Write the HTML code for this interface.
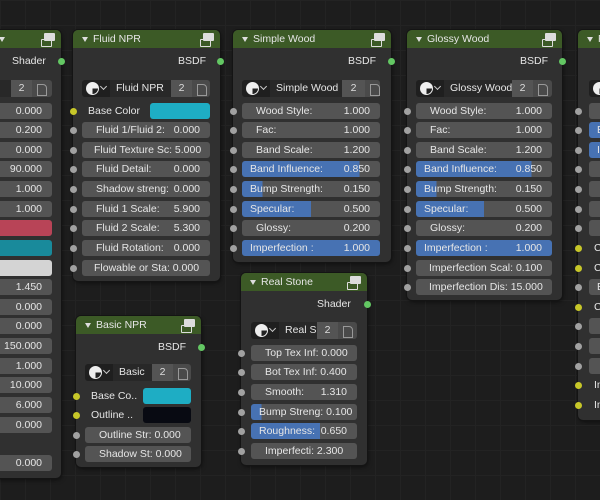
<!DOCTYPE html>
<html><head><meta charset="utf-8"><style>
*{margin:0;padding:0;box-sizing:border-box}
body{width:600px;height:500px;overflow:hidden;position:relative;background:#1d1d1d;
background-image:linear-gradient(#232323 1px,transparent 1px),linear-gradient(90deg,#232323 1px,transparent 1px);background-size:25px 25px;
font-family:"Liberation Sans",sans-serif;font-size:10.5px;color:#e0e0e0}
.n{position:absolute;background:#303030;border-radius:5px;box-shadow:0 0 0 1px #141414,1px 2px 4px rgba(0,0,0,.5);overflow:hidden}
.h{position:absolute;left:0;right:0;top:0;height:18px;background:#3c5a26;color:#e6e6e6;font-size:10.5px;line-height:18px;padding-left:20px}
.h:before{content:"";position:absolute;left:9px;top:7px;border-left:3px solid transparent;border-right:3px solid transparent;border-top:5px solid #ddd}
.hi{position:absolute;right:7px;top:3px;width:13px;height:12px}
.hi:before{content:"";position:absolute;left:3px;top:0;width:9px;height:6px;border:1.5px solid #ddd;border-radius:1px;background:#ddd}
.hi:after{content:"";position:absolute;left:0;top:6px;width:9px;height:6px;border:1.5px solid #ddd;border-radius:1px}
.f{position:absolute;height:16px;background:#545454;border-radius:3px;line-height:16px;white-space:nowrap;overflow:hidden;color:#e6e6e6;padding:0 4px 0 14px}
.f b{position:absolute;right:10px;top:0;font-weight:normal}
.sl{padding-left:8px}
.s{position:absolute;width:7px;height:7px;border-radius:50%;background:#a1a1a1}
.y{background:#c7c729}.g{background:#63c763}
.t{position:absolute;line-height:16px;color:#e6e6e6;white-space:nowrap}
.db{position:absolute;height:17px}
.db .ic{position:absolute;left:0;top:0;height:17px;background:#1f1f1f;border-radius:3px 0 0 3px}
.db .ic i{position:absolute;left:4px;top:2px;width:13px;height:13px;border-radius:50%;background:conic-gradient(#eee 0 25%,#222 25% 50%,#eee 50% 75%,#eee 75%);border:1px solid #eee}
.db .ic u{position:absolute;left:19px;top:4px;width:5px;height:5px;border-right:1px solid #ccc;border-bottom:1px solid #ccc;transform:rotate(45deg)}
.db .nm{position:absolute;top:0;height:17px;background:#282828;line-height:17px;padding-left:6px;color:#e6e6e6;overflow:hidden;white-space:nowrap}
.db .nu{position:absolute;top:0;height:17px;background:#545454;line-height:17px;text-align:center;color:#ddd}
.db .pg{position:absolute;top:0;height:17px;background:#4a4a4a;border-radius:0 3px 3px 0}
.db .pg:after{content:"";position:absolute;left:5px;top:4px;width:8px;height:10px;border:1px solid #999;border-radius:0 4px 0 0}
.sw{position:absolute;height:16px;border-radius:3px}
</style></head><body>

<!-- Left node -->
<div class="n" style="left:-10px;top:30px;width:71px;height:448px"><div class="h"></div><div class="hi"></div></div>
<div class="t" style="left:12px;top:53px">Shader</div><div class="s g" style="left:57.5px;top:57.5px"></div>
<div class="db" style="left:-2px;top:80px;width:54px"><div class="nm" style="left:0;width:13px"></div><div class="nu" style="left:13px;width:21px">2</div><div class="pg" style="left:34px;width:20px"></div></div>
<div class="f" style="left:-6px;top:103px;width:58px"><b>0.000</b></div>
<div class="f" style="left:-6px;top:122px;width:58px"><b>0.200</b></div>
<div class="f" style="left:-6px;top:142px;width:58px"><b>0.000</b></div>
<div class="f" style="left:-6px;top:161px;width:58px"><b>90.000</b></div>
<div class="f" style="left:-6px;top:181px;width:58px"><b>1.000</b></div>
<div class="f" style="left:-6px;top:201px;width:58px"><b>1.000</b></div>
<div class="sw" style="left:-6px;top:220px;width:58px;background:#b84457"></div>
<div class="sw" style="left:-6px;top:240px;width:58px;background:#198a9b"></div>
<div class="sw" style="left:-6px;top:260px;width:58px;background:#d4d4d4"></div>
<div class="f" style="left:-6px;top:279px;width:58px"><b>1.450</b></div>
<div class="f" style="left:-6px;top:299px;width:58px"><b>0.000</b></div>
<div class="f" style="left:-6px;top:318px;width:58px"><b>0.000</b></div>
<div class="f" style="left:-6px;top:338px;width:58px"><b>150.000</b></div>
<div class="f" style="left:-6px;top:358px;width:58px"><b>1.000</b></div>
<div class="f" style="left:-6px;top:377px;width:58px"><b>10.000</b></div>
<div class="f" style="left:-6px;top:397px;width:58px"><b>6.000</b></div>
<div class="f" style="left:-6px;top:417px;width:58px"><b>0.000</b></div>
<div class="f" style="left:-6px;top:455px;width:58px"><b>0.000</b></div>

<!-- Fluid NPR -->
<div class="n" style="left:73px;top:30px;width:147px;height:251px"><div class="h">Fluid NPR</div><div class="hi"></div></div>
<div class="t" style="left:178px;top:53px">BSDF</div><div class="s g" style="left:216.5px;top:57.5px"></div>
<div class="db" style="left:82px;top:80px;width:128px"><div class="ic" style="width:28px"><i></i><u></u></div><div class="nm" style="left:28px;width:61px">Fluid NPR</div><div class="nu" style="left:89px;width:21px">2</div><div class="pg" style="left:110px;width:18px"></div></div>
<div class="s y" style="left:69.5px;top:107.5px"></div><div class="t" style="left:88px;top:103px">Base Color</div><div class="sw" style="left:150px;top:103px;width:60px;background:#1eadc4"></div>
<div class="s" style="left:69.5px;top:126.5px"></div><div class="f" style="left:82px;top:122px;width:128px">Fluid 1/Fluid 2:<b>0.000</b></div>
<div class="s" style="left:69.5px;top:146.5px"></div><div class="f" style="left:82px;top:142px;width:128px;padding-left:12px">Fluid Texture Sc: 5.000</div>
<div class="s" style="left:69.5px;top:165.5px"></div><div class="f" style="left:82px;top:161px;width:128px">Fluid Detail:<b>0.000</b></div>
<div class="s" style="left:69.5px;top:185.5px"></div><div class="f" style="left:82px;top:181px;width:128px">Shadow streng:<b>0.000</b></div>
<div class="s" style="left:69.5px;top:205.5px"></div><div class="f" style="left:82px;top:201px;width:128px">Fluid 1 Scale:<b>5.900</b></div>
<div class="s" style="left:69.5px;top:224.5px"></div><div class="f" style="left:82px;top:220px;width:128px">Fluid 2 Scale:<b>5.300</b></div>
<div class="s" style="left:69.5px;top:244.5px"></div><div class="f" style="left:82px;top:240px;width:128px">Fluid Rotation:<b>0.000</b></div>
<div class="s" style="left:69.5px;top:264.5px"></div><div class="f" style="left:82px;top:260px;width:128px;padding-left:12px">Flowable or Sta: 0.000</div>

<!-- Simple Wood -->
<div class="n" style="left:233px;top:30px;width:158px;height:232px"><div class="h">Simple Wood</div><div class="hi"></div></div>
<div class="t" style="left:348px;top:53px">BSDF</div><div class="s g" style="left:387.5px;top:57.5px"></div>
<div class="db" style="left:242px;top:80px;width:138px"><div class="ic" style="width:28px"><i></i><u></u></div><div class="nm" style="left:28px;width:72px">Simple Wood</div><div class="nu" style="left:100px;width:23px">2</div><div class="pg" style="left:123px;width:15px"></div></div>
<div class="s" style="left:229.5px;top:107.5px"></div><div class="f" style="left:242px;top:103px;width:138px">Wood Style:<b>1.000</b></div>
<div class="s" style="left:229.5px;top:126.5px"></div><div class="f" style="left:242px;top:122px;width:138px">Fac:<b>1.000</b></div>
<div class="s" style="left:229.5px;top:146.5px"></div><div class="f" style="left:242px;top:142px;width:138px">Band Scale:<b>1.200</b></div>
<div class="s" style="left:229.5px;top:165.5px"></div><div class="f sl" style="left:242px;top:161px;width:138px;background:linear-gradient(90deg,#4772b3 85%,#545454 85%)">Band Influence:<b>0.850</b></div>
<div class="s" style="left:229.5px;top:185.5px"></div><div class="f sl" style="left:242px;top:181px;width:138px;background:linear-gradient(90deg,#4772b3 15%,#545454 15%)">Bump Strength:<b>0.150</b></div>
<div class="s" style="left:229.5px;top:205.5px"></div><div class="f sl" style="left:242px;top:201px;width:138px;background:linear-gradient(90deg,#4772b3 50%,#545454 50%)">Specular:<b>0.500</b></div>
<div class="s" style="left:229.5px;top:224.5px"></div><div class="f" style="left:242px;top:220px;width:138px">Glossy:<b>0.200</b></div>
<div class="s" style="left:229.5px;top:244.5px"></div><div class="f sl" style="left:242px;top:240px;width:138px;background:#4772b3">Imperfection :<b>1.000</b></div>

<!-- Glossy Wood -->
<div class="n" style="left:407px;top:30px;width:155px;height:270px"><div class="h">Glossy Wood</div><div class="hi"></div></div>
<div class="t" style="left:520px;top:53px">BSDF</div><div class="s g" style="left:558.5px;top:57.5px"></div>
<div class="db" style="left:416px;top:80px;width:136px"><div class="ic" style="width:28px"><i></i><u></u></div><div class="nm" style="left:28px;width:68px">Glossy Wood</div><div class="nu" style="left:96px;width:21px">2</div><div class="pg" style="left:117px;width:19px"></div></div>
<div class="s" style="left:403.5px;top:107.5px"></div><div class="f" style="left:416px;top:103px;width:136px">Wood Style:<b>1.000</b></div>
<div class="s" style="left:403.5px;top:126.5px"></div><div class="f" style="left:416px;top:122px;width:136px">Fac:<b>1.000</b></div>
<div class="s" style="left:403.5px;top:146.5px"></div><div class="f" style="left:416px;top:142px;width:136px">Band Scale:<b>1.200</b></div>
<div class="s" style="left:403.5px;top:165.5px"></div><div class="f sl" style="left:416px;top:161px;width:136px;background:linear-gradient(90deg,#4772b3 85%,#545454 85%)">Band Influence:<b>0.850</b></div>
<div class="s" style="left:403.5px;top:185.5px"></div><div class="f sl" style="left:416px;top:181px;width:136px;background:linear-gradient(90deg,#4772b3 15%,#545454 15%)">Bump Strength:<b>0.150</b></div>
<div class="s" style="left:403.5px;top:205.5px"></div><div class="f sl" style="left:416px;top:201px;width:136px;background:linear-gradient(90deg,#4772b3 50%,#545454 50%)">Specular:<b>0.500</b></div>
<div class="s" style="left:403.5px;top:224.5px"></div><div class="f" style="left:416px;top:220px;width:136px">Glossy:<b>0.200</b></div>
<div class="s" style="left:403.5px;top:244.5px"></div><div class="f sl" style="left:416px;top:240px;width:136px;background:#4772b3">Imperfection :<b>1.000</b></div>
<div class="s" style="left:403.5px;top:264.5px"></div><div class="f" style="left:416px;top:260px;width:136px;padding-left:13px">Imperfection Scal: 0.100</div>
<div class="s" style="left:403.5px;top:283.5px"></div><div class="f" style="left:416px;top:279px;width:136px;padding-left:13px">Imperfection Dis: 15.000</div>

<!-- Right node -->
<div class="n" style="left:578px;top:30px;width:40px;height:390px"><div class="h" style="padding-left:20px">F</div></div>
<div class="db" style="left:589px;top:80px;width:20px"><div class="ic" style="width:20px"><i></i></div></div>
<div class="s" style="left:574.5px;top:107.5px"></div><div class="f" style="left:589px;top:103px;width:20px"></div>
<div class="s" style="left:574.5px;top:126.5px"></div><div class="f sl" style="left:589px;top:122px;width:20px;background:#4772b3">B</div>
<div class="s" style="left:574.5px;top:146.5px"></div><div class="f sl" style="left:589px;top:142px;width:20px;background:#4772b3">I</div>
<div class="s" style="left:574.5px;top:165.5px"></div><div class="f" style="left:589px;top:161px;width:20px"></div>
<div class="s" style="left:574.5px;top:185.5px"></div><div class="f" style="left:589px;top:181px;width:20px"></div>
<div class="s" style="left:574.5px;top:205.5px"></div><div class="f" style="left:589px;top:201px;width:20px"></div>
<div class="s" style="left:574.5px;top:224.5px"></div><div class="f" style="left:589px;top:220px;width:20px"></div>
<div class="s y" style="left:574.5px;top:244.5px"></div><div class="t" style="left:594px;top:240px">C</div>
<div class="s y" style="left:574.5px;top:264.5px"></div><div class="t" style="left:594px;top:260px">C</div>
<div class="s" style="left:574.5px;top:283.5px"></div><div class="f sl" style="left:589px;top:279px;width:20px">E</div>
<div class="s y" style="left:574.5px;top:303.5px"></div><div class="t" style="left:594px;top:299px">C</div>
<div class="s" style="left:574.5px;top:322.5px"></div><div class="f" style="left:589px;top:318px;width:20px"></div>
<div class="s" style="left:574.5px;top:342.5px"></div><div class="f" style="left:589px;top:338px;width:20px"></div>
<div class="s" style="left:574.5px;top:362.5px"></div><div class="f" style="left:589px;top:358px;width:20px"></div>
<div class="s y" style="left:574.5px;top:381.5px"></div><div class="t" style="left:594px;top:377px">In</div>
<div class="s y" style="left:574.5px;top:401.5px"></div><div class="t" style="left:594px;top:397px">In</div>

<!-- Basic NPR -->
<div class="n" style="left:76px;top:316px;width:125px;height:151px"><div class="h">Basic NPR</div><div class="hi"></div></div>
<div class="t" style="left:158px;top:339px">BSDF</div><div class="s g" style="left:197.5px;top:343.5px"></div>
<div class="db" style="left:85px;top:364px;width:106px"><div class="ic" style="width:28px"><i></i><u></u></div><div class="nm" style="left:28px;width:39px">Basic</div><div class="nu" style="left:67px;width:21px">2</div><div class="pg" style="left:88px;width:18px"></div></div>
<div class="s y" style="left:72.5px;top:392.5px"></div><div class="t" style="left:91px;top:388px">Base Co..</div><div class="sw" style="left:143px;top:388px;width:48px;background:#1eadc4"></div>
<div class="s y" style="left:72.5px;top:411.5px"></div><div class="t" style="left:91px;top:407px">Outline ..</div><div class="sw" style="left:143px;top:407px;width:48px;background:#080a12"></div>
<div class="s" style="left:72.5px;top:431.5px"></div><div class="f" style="left:85px;top:427px;width:106px">Outline Str: 0.000</div>
<div class="s" style="left:72.5px;top:450.5px"></div><div class="f" style="left:85px;top:446px;width:106px">Shadow St: 0.000</div>

<!-- Real Stone -->
<div class="n" style="left:241px;top:273px;width:126px;height:192px"><div class="h">Real Stone</div><div class="hi"></div></div>
<div class="t" style="left:317px;top:296px">Shader</div><div class="s g" style="left:363.5px;top:300.5px"></div>
<div class="db" style="left:251px;top:322px;width:106px"><div class="ic" style="width:28px"><i></i><u></u></div><div class="nm" style="left:28px;width:38px">Real S</div><div class="nu" style="left:66px;width:21px">2</div><div class="pg" style="left:87px;width:19px"></div></div>
<div class="s" style="left:237.5px;top:349.5px"></div><div class="f" style="left:251px;top:345px;width:106px">Top Tex Inf: 0.000</div>
<div class="s" style="left:237.5px;top:368.5px"></div><div class="f" style="left:251px;top:364px;width:106px">Bot Tex Inf: 0.400</div>
<div class="s" style="left:237.5px;top:388.5px"></div><div class="f" style="left:251px;top:384px;width:106px;padding-left:14px">Smooth:<b>1.310</b></div>
<div class="s" style="left:237.5px;top:408.5px"></div><div class="f sl" style="left:251px;top:404px;width:106px;background:linear-gradient(90deg,#4772b3 10%,#545454 10%)">Bump Streng: 0.100</div>
<div class="s" style="left:237.5px;top:427.5px"></div><div class="f sl" style="left:251px;top:423px;width:106px;background:linear-gradient(90deg,#4772b3 65%,#545454 65%)">Roughness:<b>0.650</b></div>
<div class="s" style="left:237.5px;top:447.5px"></div><div class="f" style="left:251px;top:443px;width:106px">Imperfecti:  2.300</div>

</body></html>
